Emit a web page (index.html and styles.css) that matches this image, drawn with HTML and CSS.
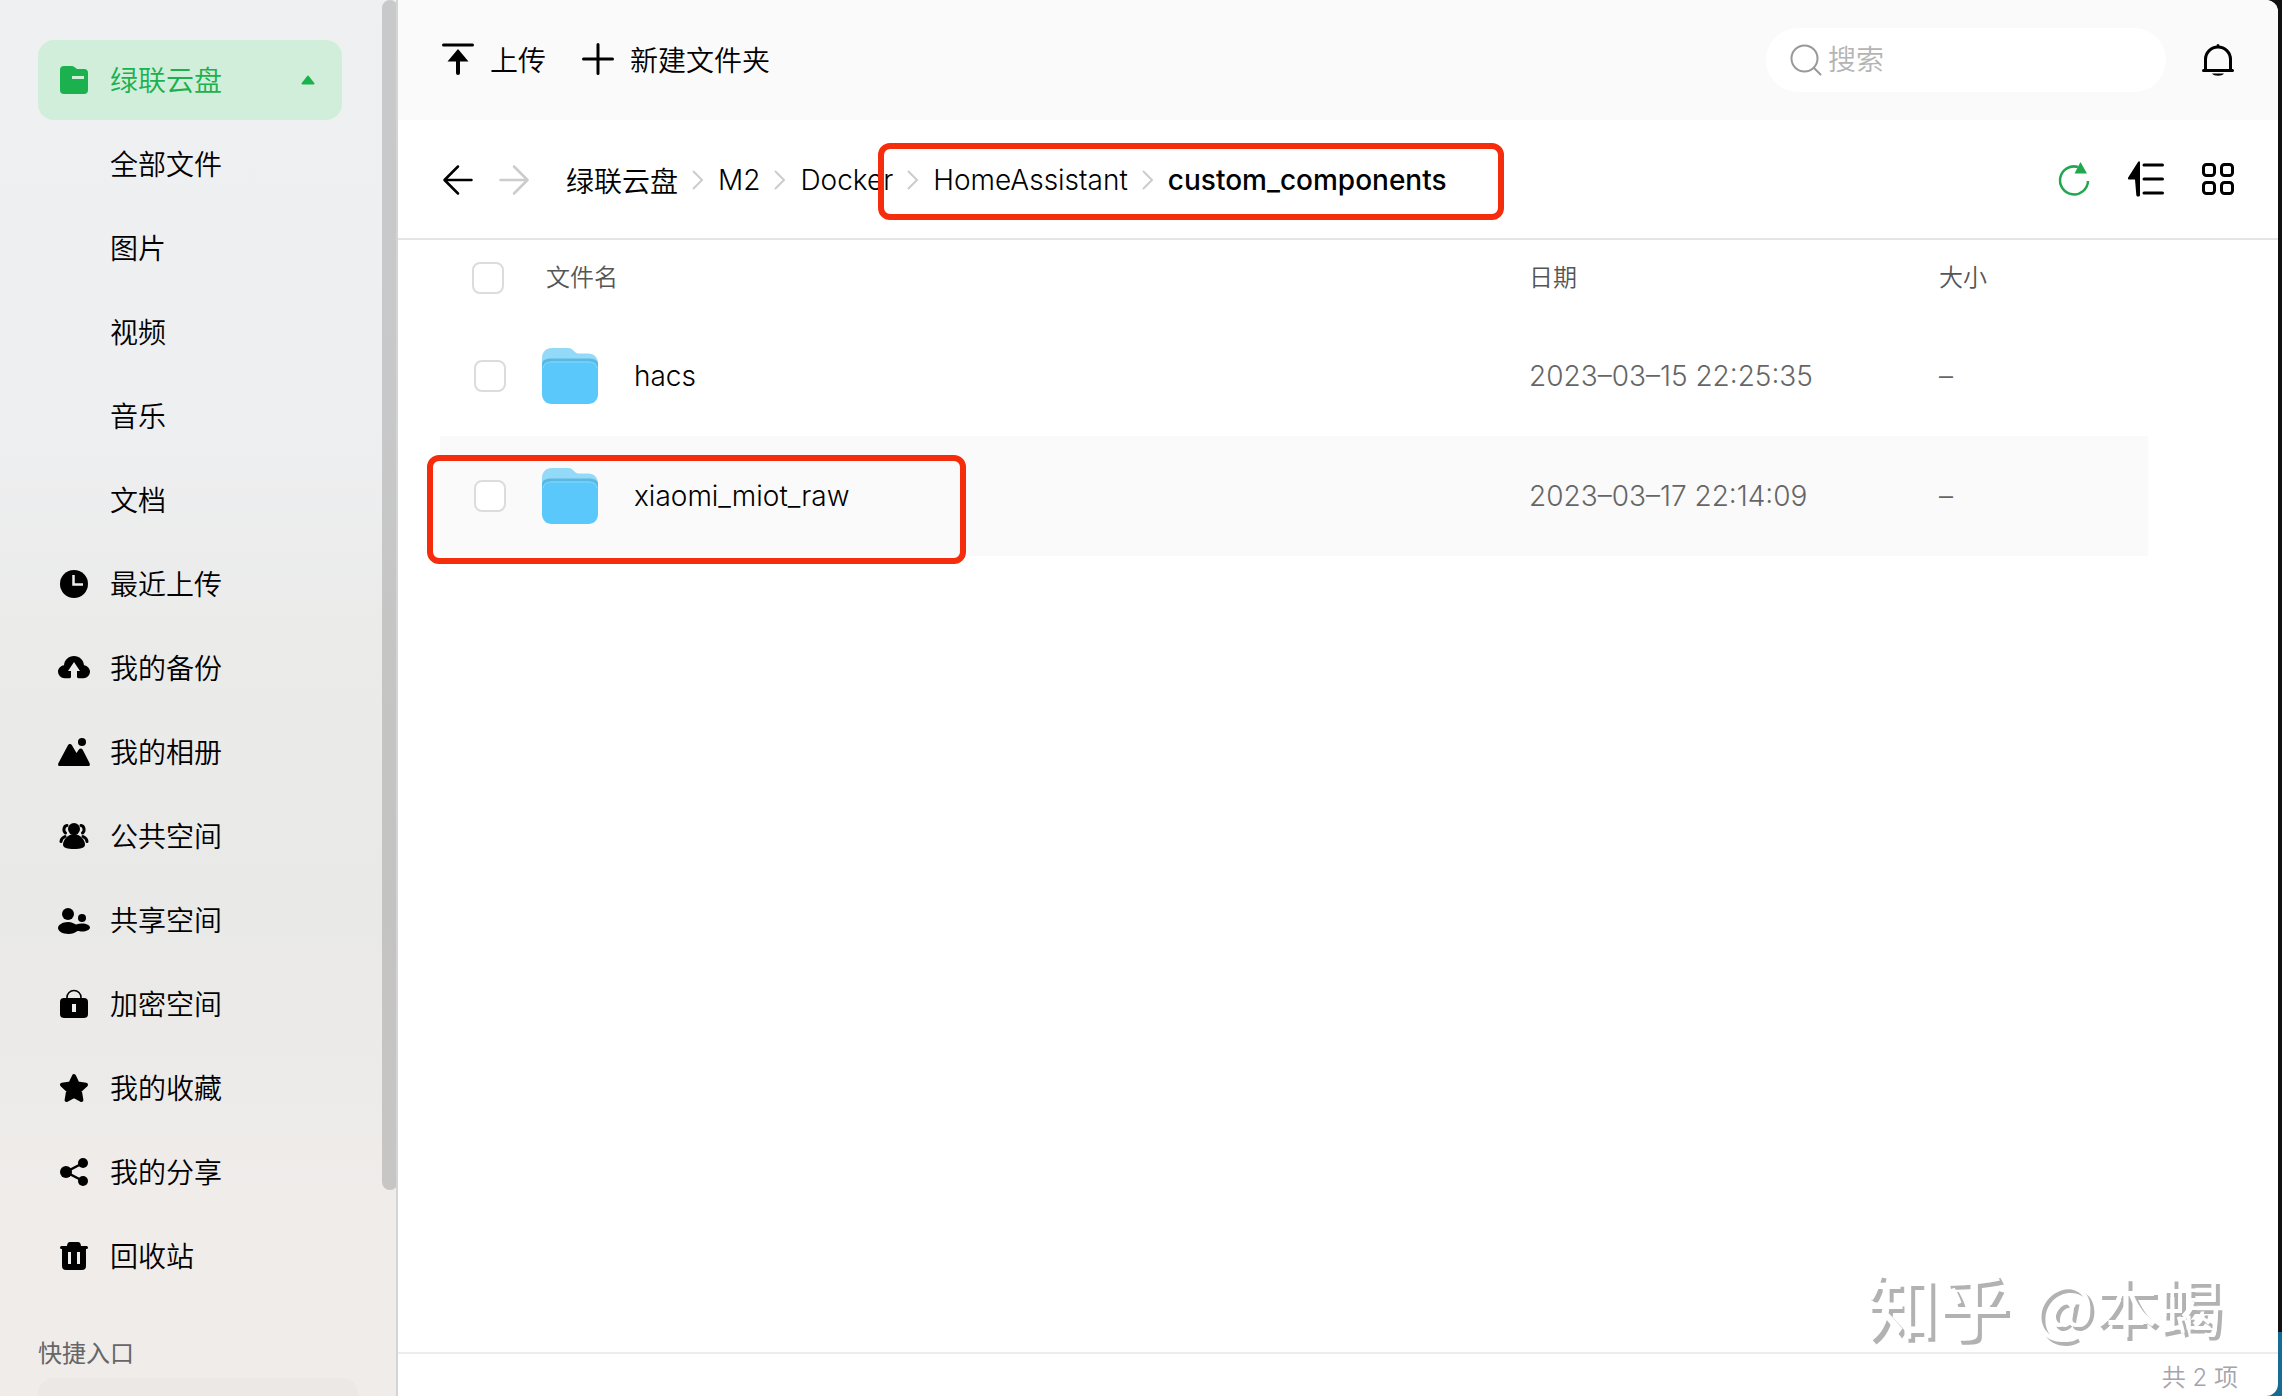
FILE: index.html
```html
<!DOCTYPE html>
<html lang="zh-CN">
<head>
    <meta charset="UTF-8">
    <meta name="viewport" content="width=device-width, initial-scale=1.0">
    <title>绿联云盘</title>
    <link rel="stylesheet" href="styles.css">
</head>
<body>
    <div class="window">
        <aside class="sidebar">
            <nav class="menu">
                <a href="#drive" class="menu-item active">
                    <svg class="icon" viewBox="0 0 32 32"><path d="M6 2h7c2 0 3 .6 4.400 1.800L19 5h7a4 4 0 0 1 4 4v17a4 4 0 0 1-4 4H6a4 4 0 0 1-4-4V6a4 4 0 0 1 4-4z"/><path d="M14 13.500h12" class="cut" stroke-width="3"/></svg>
                    <span>绿联云盘</span>
                    <svg class="caret" viewBox="0 0 14 10"><path d="M7 1.500 12.500 8.500h-11z" fill="currentColor" stroke="currentColor" stroke-width="2" stroke-linejoin="round"/></svg>
                </a>
                <a href="#all" class="menu-item sub"><span>全部文件</span></a>
                <a href="#images" class="menu-item sub"><span>图片</span></a>
                <a href="#videos" class="menu-item sub"><span>视频</span></a>
                <a href="#music" class="menu-item sub"><span>音乐</span></a>
                <a href="#docs" class="menu-item sub"><span>文档</span></a>
                <a href="#recent" class="menu-item">
                    <svg class="icon" viewBox="0 0 32 32"><circle cx="16" cy="16" r="14"/><path d="M15.500 7v9.500h9.500" class="cut" stroke-width="2.500"/></svg>
                    <span>最近上传</span>
                </a>
                <a href="#backup" class="menu-item">
                    <svg class="icon" viewBox="0 0 32 32"><path d="M16 4c5.500 0 9.600 4 10 9.200 3.500.5 6 3.300 6 6.500a6.500 6.500 0 0 1-6.500 6.500h-5c-1 0-1.500-.7-1.500-1.700V19h3l-6-9-6 9h3v5.500c0 1-.5 1.700-1.500 1.700h-5A6.500 6.500 0 0 1 0 19.700c0-3.200 2.500-6 6-6.500C6.400 8 10.500 4 16 4z"/></svg>
                    <span>我的备份</span>
                </a>
                <a href="#album" class="menu-item">
                    <svg class="icon" viewBox="0 0 32 32"><circle cx="24" cy="6" r="4"/><path d="M9.800 9.500c1-2 3.200-2 4.300 0L18.500 17l2.200-3.200c1.200-1.700 2.900-1.700 4 0L31.500 27c.8 1.700.3 3-1.500 3H2C.2 30-.4 28.700.5 27z"/></svg>
                    <span>我的相册</span>
                </a>
                <a href="#public" class="menu-item">
                    <svg class="icon" viewBox="0 0 32 32"><circle cx="16" cy="9" r="6"/><path d="M16 14c6 0 11 6 11 10.500 0 3.500-4.500 4.500-11 4.500S5 28 5 24.500C5 20 10 14 16 14z"/><path d="M9 5.500c-3.500.5-4 5.500-1.500 7.500M23 5.500c3.500.5 4 5.500 1.500 7.500M7 16.500c-3 1.500-4 3-4 5M25 16.500c3 1.500 4 3 4 5" fill="none" stroke="currentColor" stroke-width="3" stroke-linecap="round"/></svg>
                    <span>公共空间</span>
                </a>
                <a href="#shared" class="menu-item">
                    <svg class="icon" viewBox="0 0 32 32"><circle cx="10" cy="10" r="6"/><circle cx="24" cy="14" r="4"/><path d="M10 18c4 0 6 1.500 8 2.500 2-.7 4-1 6-1 4.500 0 8 1.800 8 4s-3.500 4-8 4c-1.800 0-3-.2-4.500-.5-2.500 1.800-5.500 3-9 3C4.500 30 0 27 0 24s4.500-6 10-6z"/></svg>
                    <span>共享空间</span>
                </a>
                <a href="#private" class="menu-item">
                    <svg class="icon" viewBox="0 0 32 32"><rect x="2" y="10" width="28" height="20" rx="4"/><path d="M9 11V9.500a7 7 0 0 1 14 0V11" fill="none" stroke="currentColor" stroke-width="1.600"/><path d="M16 16v8" class="cut" stroke-width="4"/></svg>
                    <span>加密空间</span>
                </a>
                <a href="#favorites" class="menu-item">
                    <svg class="icon" viewBox="0 0 32 32"><path d="M16 4l3.600 7.600 8.400 1.100-6.200 5.800 1.600 9.500L16 24l-7.400 4 1.600-9.500L4 12.700l8.400-1.100z" stroke="currentColor" stroke-width="4" stroke-linejoin="round"/></svg>
                    <span>我的收藏</span>
                </a>
                <a href="#shares" class="menu-item">
                    <svg class="icon" viewBox="0 0 32 32"><circle cx="8" cy="16" r="6"/><circle cx="25" cy="7" r="5"/><circle cx="25" cy="25" r="5"/><path d="M25 7 8 16l17 9" fill="none" stroke="currentColor" stroke-width="2.500"/></svg>
                    <span>我的分享</span>
                </a>
                <a href="#trash" class="menu-item">
                    <svg class="icon" viewBox="0 0 32 32"><path d="M12 2h8c1.700 0 2.800 1.400 3 4h5.500a1.500 1.500 0 0 1 0 3H28v17a4 4 0 0 1-4 4H8a4 4 0 0 1-4-4V9h-.5a1.500 1.500 0 0 1 0-3H9c.2-2.600 1.300-4 3-4z"/><path d="M11.500 12v12M20.500 12v12" class="cut" stroke-width="3"/></svg>
                    <span>回收站</span>
                </a>
            </nav>
            <h2 class="shortcut-title">快捷入口</h2>
            <div class="shortcut-card"></div>
            <div class="scroll-thumb"></div>
        </aside>

        <main class="main">
            <header class="toolbar">
                <button type="button" class="tool">
                    <svg class="icon" viewBox="0 0 32 32"><path d="M1.500 2h29" stroke="currentColor" stroke-width="3" stroke-linecap="round"/><path d="M16 6 26.500 18.500h-21z"/><path d="M16 15v15" stroke="currentColor" stroke-width="4" stroke-linecap="round"/></svg>
                    <span>上传</span>
                </button>
                <button type="button" class="tool">
                    <svg class="icon line" viewBox="0 0 32 32"><path d="M16 1.500v29M1.500 16h29" stroke-width="3"/></svg>
                    <span>新建文件夹</span>
                </button>
                <label class="search">
                    <svg class="icon line" viewBox="0 0 32 32"><circle cx="14.500" cy="14.500" r="13" stroke-width="2"/><path d="M24 24l6.500 6.500" stroke-width="2"/></svg>
                    <input type="text" placeholder="搜索" aria-label="搜索">
                </label>
                <button type="button" class="icon-button" aria-label="通知">
                    <svg class="icon line" viewBox="0 0 32 32"><path d="M3.500 26V15.500a12.500 12.500 0 0 1 25 0V26M1.500 26.500h29M16 1.500v1.500" stroke-width="3"/><path d="M10 29.500h12c-2 3-10 3-12 0z" fill="currentColor" stroke="none"/></svg>
                </button>
            </header>

            <div class="pathbar">
                <button type="button" class="icon-button" aria-label="后退">
                    <svg class="icon line" viewBox="0 0 32 32"><path d="M29.500 16H3M16 2.500 2.500 16 16 29.500" stroke-width="2.500"/></svg>
                </button>
                <button type="button" class="icon-button forward" aria-label="前进" disabled>
                    <svg class="icon line" viewBox="0 0 32 32"><path d="M2.500 16H29M16 2.500 29.500 16 16 29.500" stroke-width="2.500"/></svg>
                </button>
                <nav class="crumbs">
                    <a href="#drive">绿联云盘</a>
                    <svg class="sep" viewBox="0 0 12 20"><path d="M1.500 1.500 10 10l-8.500 8.500"/></svg>
                    <a href="#m2">M2</a>
                    <svg class="sep" viewBox="0 0 12 20"><path d="M1.500 1.500 10 10l-8.500 8.500"/></svg>
                    <a href="#docker">Docker</a>
                    <svg class="sep" viewBox="0 0 12 20"><path d="M1.500 1.500 10 10l-8.500 8.500"/></svg>
                    <a href="#homeassistant">HomeAssistant</a>
                    <svg class="sep" viewBox="0 0 12 20"><path d="M1.500 1.500 10 10l-8.500 8.500"/></svg>
                    <a href="#custom" class="current">custom_components</a>
                </nav>
                <div class="views">
                    <button type="button" class="icon-button refresh" aria-label="刷新">
                        <svg class="icon line" viewBox="0 0 32 32"><path d="M30 17A14 14 0 1 1 20 3" stroke-width="2.500" stroke-linecap="butt"/><path d="M22.500-2 29 9.500H16.500z" fill="currentColor" stroke="none"/></svg>
                    </button>
                    <button type="button" class="icon-button sort" aria-label="排序">
                        <svg class="icon line" viewBox="0 0 36 36"><path d="M16 3h18.500M16 17h18.500M16 31h18.500" stroke-width="3"/><path d="M10 0c1-1.200 2-.8 2 1v32c0 2-3.500 2-3.700 0L7 17.500H1C-.2 17.500-.3 16 .5 15z" fill="currentColor" stroke="none"/></svg>
                    </button>
                    <button type="button" class="icon-button" aria-label="网格视图">
                        <svg class="icon line" viewBox="0 0 32 32"><g stroke-width="3"><rect x="1.500" y="0.500" width="11" height="11" rx="3"/><rect x="19.500" y="0.500" width="11" height="11" rx="3"/><rect x="1.500" y="18.500" width="11" height="11" rx="3"/><rect x="19.500" y="18.500" width="11" height="11" rx="3"/></g></svg>
                    </button>
                </div>
                <div class="mark mark-path"></div>
            </div>

            <div class="files">
                <table class="file-table">
                    <thead>
                        <tr>
                            <th class="col-check"><input type="checkbox" aria-label="全选"></th>
                            <th class="col-name">文件名</th>
                            <th class="col-date">日期</th>
                            <th class="col-size">大小</th>
                        </tr>
                    </thead>
                    <tbody>
                        <tr>
                            <td class="col-check"><input type="checkbox" aria-label="hacs"></td>
                            <td class="name">
                                <div class="name-cell">
                                    <svg class="folder" viewBox="0 0 56 56"><path d="M10 0h16c3 0 4 1 6.500 3.500C34 5 35 5.500 37 5.500h9c6 0 10 4 10 10V30H0V10C0 4 4 0 10 0z" fill="#93daf8"/><path d="M0 16c0-4 4-5.500 10-5.500h36c6 0 10 1.500 10 5.500v8H0z" fill="#5ab8e2"/><path d="M0 22c0-6 4-8.500 10-8.500h36c6 0 10 2.500 10 8.500v24c0 6-4 10-10 10H10C4 56 0 52 0 46z" fill="#5ac8fa"/><path d="M1 20c1-4.500 4-6 9-6h36c5 0 8 1.500 9 6" fill="none" stroke="#86dafd"/></svg>
                                    <a href="#hacs">hacs</a>
                                </div>
                            </td>
                            <td>2023–03–15 22:25:35</td>
                            <td>–</td>
                        </tr>
                        <tr class="hovered">
                            <td class="col-check"><input type="checkbox" aria-label="xiaomi_miot_raw"></td>
                            <td class="name">
                                <div class="name-cell">
                                    <svg class="folder" viewBox="0 0 56 56"><path d="M10 0h16c3 0 4 1 6.500 3.500C34 5 35 5.500 37 5.500h9c6 0 10 4 10 10V30H0V10C0 4 4 0 10 0z" fill="#93daf8"/><path d="M0 16c0-4 4-5.500 10-5.500h36c6 0 10 1.500 10 5.500v8H0z" fill="#5ab8e2"/><path d="M0 22c0-6 4-8.500 10-8.500h36c6 0 10 2.500 10 8.500v24c0 6-4 10-10 10H10C4 56 0 52 0 46z" fill="#5ac8fa"/><path d="M1 20c1-4.500 4-6 9-6h36c5 0 8 1.500 9 6" fill="none" stroke="#86dafd"/></svg>
                                    <a href="#xiaomi">xiaomi_miot_raw</a>
                                </div>
                            </td>
                            <td>2023–03–17 22:14:09</td>
                            <td>–</td>
                        </tr>
                    </tbody>
                </table>
                <div class="mark mark-row"></div>
                <div class="watermark"><b>知乎</b><span>@本蝎</span></div>
            </div>

            <footer class="status">共 2 项</footer>
        </main>
    </div>
</body>
</html>
```
FILE: styles.css
```css
* { box-sizing: border-box; }
body { margin: 0; background: linear-gradient(#111 0 1332px, #176a92 1332px); font-family: Inter, "Noto Sans CJK SC", sans-serif; font-size: 28px; font-weight: 350; color: #000; }
a { color: inherit; text-decoration: none; }
button { display: flex; align-items: center; padding: 0; border: none; background: none; font: inherit; color: inherit; cursor: pointer; }
.window { display: flex; height: 100vh; margin-right: 4px; background: #fff; border-radius: 0 12px 12px 0; overflow: hidden; }
.icon { display: block; flex: none; width: 32px; height: 32px; fill: currentColor; overflow: visible; }
.icon .cut { fill: none; stroke: #eee; stroke-linecap: butt; }
.line { fill: none; stroke: currentColor; stroke-linecap: round; stroke-linejoin: round; }

/* sidebar */
.sidebar { position: relative; flex: none; width: 398px; padding: 40px 38px 0; border-right: 2px solid #d4d4d4; background: linear-gradient(#eff0f2 0, #eeeff1 30%, #ebebea 45%, #e9e9e8 65%, #efecea 85%, #efecea 100%); overflow: hidden; }
.menu { display: flex; flex-direction: column; gap: 4px; width: 304px; }
.menu-item { display: flex; align-items: center; gap: 20px; height: 80px; padding: 0 27px 0 20px; border-radius: 16px; }
.menu-item span { padding-bottom: 3px; }
.menu-item.sub { padding-left: 72px; }
.menu-item.active { background: #d1eedb; color: #1bb14e; }
.menu-item.active .cut { stroke: #d1eedb; }
.caret { width: 14px; height: 10px; margin-left: auto; }
.shortcut-title { margin: 38px 0 0; font-size: 24px; line-height: 40px; font-weight: 400; color: #666; }
.shortcut-card { width: 320px; height: 80px; margin-top: 4px; border-radius: 16px; background: #ebe8e6; }
.scroll-thumb { position: absolute; top: 0; right: -2px; width: 16px; height: 1190px; border-radius: 8px; background: rgba(0, 0, 0, 0.16); }

/* main */
.main { display: flex; flex-direction: column; flex: 1; min-width: 0; }
.toolbar { display: flex; align-items: center; flex: none; gap: 36px; height: 120px; padding: 0 44px; background: #fafafa; }
.tool { gap: 16px; padding-bottom: 2px; }
.search { display: flex; align-items: center; gap: 6px; width: 400px; height: 64px; margin-left: auto; padding: 0 24px; border-radius: 32px; background: #fff; color: #999; }
.search input { flex: 1; min-width: 0; padding: 0; border: none; outline: none; background: none; font: inherit; }
.search input::placeholder { color: #b4b4b4; }
.pathbar { position: relative; display: flex; align-items: center; flex: none; height: 120px; padding: 2px 44px 0; border-bottom: 2px solid #e4e4e4; }
.forward { margin-left: 24px; color: #ccc; }
.crumbs { display: flex; align-items: center; gap: 14px; margin-left: 36px; }
.crumbs .current { font-weight: 550; }
.sep { width: 12px; height: 20px; fill: none; stroke: #ccc; stroke-width: 2; stroke-linecap: round; }
.views { display: flex; align-items: center; gap: 38px; margin-left: auto; }
.refresh { color: #21a84f; }
.sort .icon { width: 36px; height: 36px; }

/* red outlines over the content */
.mark { position: absolute; border: 6px solid #f52d0c; border-radius: 12px; pointer-events: none; }
.mark-path { left: 480px; top: 23px; width: 626px; height: 77px; }
.mark-row { left: 29px; top: 215px; width: 539px; height: 109px; }

/* file list */
.files { position: relative; flex: 1; padding: 0 130px 0 42px; }
.file-table { width: 100%; table-layout: fixed; border-collapse: collapse; }
.file-table th { height: 76px; padding: 0 0 6px; font-size: 24px; font-weight: 350; text-align: left; color: #555; }
.file-table td { height: 120px; padding: 0; color: #666; }
.file-table th.col-check { width: 102px; padding: 0 0 0 32px; }
.file-table td.col-check { padding-left: 34px; }
.file-table th.col-name { padding-left: 4px; }
.col-date { width: 410px; }
.col-size { width: 209px; }
.hovered { background: #fafafa; }
.file-table td.name { color: #000; }
.name-cell { display: flex; align-items: center; gap: 36px; }
.folder { width: 56px; height: 56px; }
input[type="checkbox"] { appearance: none; display: block; width: 32px; height: 32px; margin: 0; border: 2px solid #dcdcdc; border-radius: 8px; background: #fff; }
.watermark { position: absolute; right: 56px; bottom: 4px; display: flex; align-items: center; gap: 24px; font-family: "Noto Sans CJK SC", sans-serif; font-size: 64px; line-height: 90px; font-weight: 400; color: #fff; text-shadow: 4px 4px 0 #b2b2b2; }
.watermark b { font-size: 72px; font-weight: 500; }
.status { flex: none; height: 44px; padding-right: 40px; border-top: 2px solid #ededed; font-size: 24px; line-height: 48px; text-align: right; color: #a4a4ac; }
```
